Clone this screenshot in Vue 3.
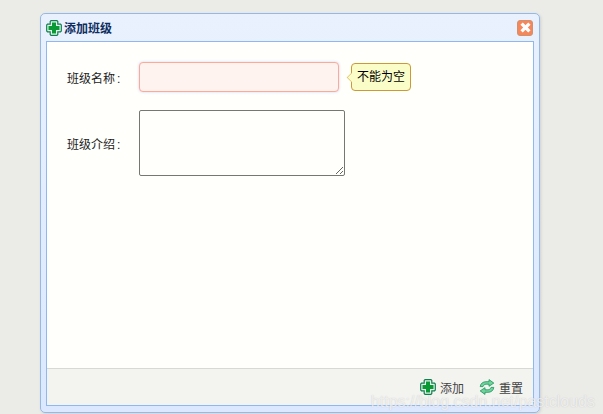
<template>
  <div class="page">
    <div class="window">
      <div class="win-head">
        <svg class="plus" viewBox="0 0 16 16">
          <path d="M5 .7h6l.8.8v2.700h2.700l.8.8v6l-.8.8h-2.700v2.700l-.8.8H5l-.8-.8v-2.700H1.500l-.8-.8v-6l.8-.8h2.700V1.500z" fill="#e4f5ea" stroke="#0f7f4f" stroke-width="1.200" />
          <path d="M6 2.500h4v3.500h3.500v4H10v3.500H6V10H2.500V6H6z" fill="#0a9a35" />
        </svg>
        <span class="win-title">添加班级</span>
        <span class="close">
          <svg viewBox="0 0 10 10"><path d="M2 2l6 6M8 2l-6 6" stroke="#fff" stroke-width="2.600" /></svg>
        </span>
      </div>
      <div class="win-body">
        <div class="form">
          <div class="row row-name">
            <label class="lbl">班级名称<span class="colon">:</span></label>
            <input class="name-input" type="text" />
            <div class="tip">不能为空</div>
          </div>
          <div class="row row-intro">
            <label class="lbl">班级介绍<span class="colon">:</span></label>
            <textarea class="intro"></textarea>
          </div>
        </div>
        <div class="footer">
          <a class="btn">
            <svg class="plus" viewBox="0 0 16 16">
              <path d="M5 .7h6l.8.8v2.700h2.700l.8.8v6l-.8.8h-2.700v2.700l-.8.8H5l-.8-.8v-2.700H1.500l-.8-.8v-6l.8-.8h2.700V1.500z" fill="#e4f5ea" stroke="#0f7f4f" stroke-width="1.200" />
              <path d="M6 2.500h4v3.500h3.500v4H10v3.500H6V10H2.500V6H6z" fill="#0a9a35" />
            </svg>
            <span>添加</span>
          </a>
          <a class="btn">
            <svg class="plus" viewBox="0 0 16 16">
              <path d="M1.200 7.600C1.600 4.400 4 2.700 7 2.700h3V.6l4.800 3.500L10 7.300V5.200H7.200C5.700 5.200 4.500 6 4 7.600z" fill="#6fd39c" stroke="#1c9058" stroke-width=".8" stroke-linejoin="round" />
              <path d="M14.800 8.400C14.400 11.600 12 13.300 9 13.300H6v2.100L1.200 11.900 6 8.700v2.100h2.800c1.500 0 2.700-.8 3.200-2.400z" fill="#6fd39c" stroke="#1c9058" stroke-width=".8" stroke-linejoin="round" />
            </svg>
            <span>重置</span>
          </a>
        </div>
      </div>
    </div>
    <div class="watermark">https://blog.csdn.net/pastclouds</div>
  </div>
</template>

<script setup>
</script>

<style>
html, body { margin: 0; background: #ebebe8; }
</style>

<style scoped>
.page {
  position: relative;
  width: 603px;
  height: 414px;
  overflow: hidden;
  padding: 13px 0 0 40px;
  box-sizing: border-box;
  background: #ebebe8;
  font-family: "Liberation Sans", "Noto Sans CJK SC", sans-serif;
  font-size: 12px;
  color: #222;
}
.window {
  width: 500px;
  height: 400px;
  box-sizing: border-box;
  display: flex;
  flex-direction: column;
  padding: 0 5px 6px;
  background: linear-gradient(#e9f1fe, #dbe8ff);
  border: 1px solid #95b8e7;
  border-radius: 5px;
  box-shadow: 1px 1px 3px #d0d0ce;
}
.win-head {
  height: 27px;
  display: flex;
  align-items: center;
  flex: none;
}
.plus { width: 16px; height: 16px; flex: none; }
.win-title {
  margin-left: 2px;
  font-weight: bold;
  color: #0e2d5f;
}
.close {
  margin-left: auto;
  margin-right: 1px;
  width: 16px;
  height: 16px;
  box-sizing: border-box;
  border-radius: 3px;
  background: #f5875a;
  border: 1px solid #cf9270;
  display: flex;
  align-items: center;
  justify-content: center;
}
.close svg { width: 13px; height: 13px; }
.win-body {
  flex: 1;
  display: flex;
  flex-direction: column;
  background: #fffffb;
  border: 1px solid #8fb8f0;
  min-height: 0;
}
.form {
  flex: 1;
  padding-top: 20px;
}
.row {
  display: flex;
  align-items: center;
}
.row-intro { margin-top: 18px; }
.lbl {
  width: 72px;
  margin-left: 20px;
  color: #222;
}
.colon { margin-left: 2px; }
.name-input {
  width: 200px;
  height: 30px;
  box-sizing: border-box;
  margin: 0;
  background: #fff3f0;
  border: 1px solid #ffa898;
  border-radius: 4px;
  box-shadow: 0 0 3px #c9d4f5;
  outline: none;
}
.tip {
  position: relative;
  margin-left: 12px;
  width: 60px;
  height: 28px;
  box-sizing: border-box;
  border: 1px solid #cc9933;
  border-radius: 4px;
  background: #fbfdc9;
  line-height: 26px;
  text-align: center;
  color: #000;
}
.tip::before {
  content: "";
  position: absolute;
  left: -5px;
  top: 9px;
  width: 8px;
  height: 8px;
  background: #fbfdc9;
  border-left: 1px solid #e0c070;
  border-bottom: 1px solid #e0c070;
  transform: rotate(45deg) scale(.75);
}
.intro {
  width: 206px;
  height: 66px;
  box-sizing: border-box;
  margin: 0;
  padding: 2px;
  background: #fffffb;
  border: 1px solid #767672;
  border-radius: 2px;
  outline: none;
  display: block;
}
.footer {
  height: 37px;
  flex: none;
  box-sizing: border-box;
  display: flex;
  align-items: center;
  justify-content: flex-end;
  gap: 15px;
  padding-right: 10px;
  background: #f3f3f0;
  border-top: 1px solid #d8d8d4;
}
.btn {
  display: flex;
  align-items: center;
  gap: 4px;
  color: #444;
}
.watermark {
  position: absolute;
  right: 8px;
  bottom: 3px;
  font-size: 16px;
  color: rgba(255, 255, 255, .7);
  text-shadow: 0 0 1px rgba(140, 140, 140, .45);
  pointer-events: none;
}
</style>
